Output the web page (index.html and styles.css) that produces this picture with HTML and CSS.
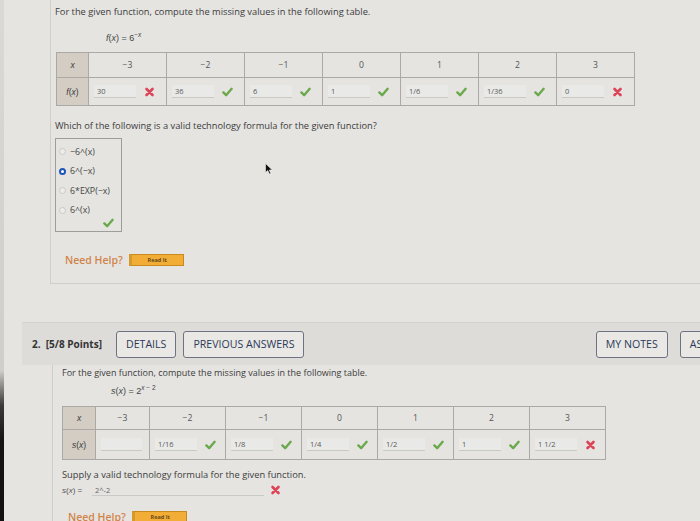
FILE: index.html
```html
<!DOCTYPE html>
<html>
<head>
<meta charset="utf-8">
<link rel="stylesheet" href="styles.css">
</head>
<body>
<div class="page">
  <div class="card card1">
    <p class="prompt">For the given function, compute the missing values in the following table.</p>
    <p class="formula"><i>f</i>(<i>x</i>) = 6<sup>−<i>x</i></sup></p>
    <table class="vt vt1">
      <tr class="hd">
        <td class="lbl"><i>x</i></td>
        <td>−3</td><td>−2</td><td>−1</td><td>0</td><td>1</td><td>2</td><td>3</td>
      </tr>
      <tr class="dt">
        <td class="lbl"><i>f</i>(<i>x</i>)</td>
        <td><div class="cell"><span class="inp">30</span><span class="ic x"><svg viewBox="0 0 10 10"><path d="M2 2L8 8M8 2L2 8"/></svg></span></div></td>
        <td><div class="cell"><span class="inp">36</span><span class="ic ok"><svg viewBox="0 0 12 10"><path d="M1.5 5.5L4.5 8.5L10.5 1.5"/></svg></span></div></td>
        <td><div class="cell"><span class="inp">6</span><span class="ic ok"><svg viewBox="0 0 12 10"><path d="M1.5 5.5L4.5 8.5L10.5 1.5"/></svg></span></div></td>
        <td><div class="cell"><span class="inp">1</span><span class="ic ok"><svg viewBox="0 0 12 10"><path d="M1.5 5.5L4.5 8.5L10.5 1.5"/></svg></span></div></td>
        <td><div class="cell"><span class="inp">1/6</span><span class="ic ok"><svg viewBox="0 0 12 10"><path d="M1.5 5.5L4.5 8.5L10.5 1.5"/></svg></span></div></td>
        <td><div class="cell"><span class="inp">1/36</span><span class="ic ok"><svg viewBox="0 0 12 10"><path d="M1.5 5.5L4.5 8.5L10.5 1.5"/></svg></span></div></td>
        <td><div class="cell"><span class="inp">0</span><span class="ic x"><svg viewBox="0 0 10 10"><path d="M2 2L8 8M8 2L2 8"/></svg></span></div></td>
      </tr>
    </table>
    <p class="prompt which">Which of the following is a valid technology formula for the given function?</p>
    <div class="choices">
      <div class="opt"><span class="radio"></span>−6^(x)</div>
      <div class="opt"><span class="radio on"></span>6^(−x)</div>
      <div class="opt"><span class="radio"></span>6*EXP(−x)</div>
      <div class="opt"><span class="radio"></span>6^(x)</div>
      <div class="chk"><span class="ic ok"><svg viewBox="0 0 12 10"><path d="M1.5 5.5L4.5 8.5L10.5 1.5"/></svg></span></div>
    </div>
    <div class="help"><span class="need">Need Help?</span><span class="readit">Read It</span></div>
  </div>

  <div class="qbar">
    <span class="qnum">2.&nbsp; [5/8 Points]</span>
    <span class="btn">DETAILS</span>
    <span class="btn">PREVIOUS ANSWERS</span>
    <span class="btn notes">MY NOTES</span>
    <span class="btn ask">ASK YOUR TEACHER</span>
  </div>

  <div class="card card2">
    <p class="prompt p2">For the given function, compute the missing values in the following table.</p>
    <p class="formula f2"><i>s</i>(<i>x</i>) = 2<sup><i>x</i> − 2</sup></p>
    <table class="vt vt2">
      <tr class="hd">
        <td class="lbl"><i>x</i></td>
        <td>−3</td><td>−2</td><td>−1</td><td>0</td><td>1</td><td>2</td><td>3</td>
      </tr>
      <tr class="dt">
        <td class="lbl"><i>s</i>(<i>x</i>)</td>
        <td><div class="cell"><span class="inp"></span></div></td>
        <td><div class="cell"><span class="inp">1/16</span><span class="ic ok"><svg viewBox="0 0 12 10"><path d="M1.5 5.5L4.5 8.5L10.5 1.5"/></svg></span></div></td>
        <td><div class="cell"><span class="inp">1/8</span><span class="ic ok"><svg viewBox="0 0 12 10"><path d="M1.5 5.5L4.5 8.5L10.5 1.5"/></svg></span></div></td>
        <td><div class="cell"><span class="inp">1/4</span><span class="ic ok"><svg viewBox="0 0 12 10"><path d="M1.5 5.5L4.5 8.5L10.5 1.5"/></svg></span></div></td>
        <td><div class="cell"><span class="inp">1/2</span><span class="ic ok"><svg viewBox="0 0 12 10"><path d="M1.5 5.5L4.5 8.5L10.5 1.5"/></svg></span></div></td>
        <td><div class="cell"><span class="inp">1</span><span class="ic ok"><svg viewBox="0 0 12 10"><path d="M1.5 5.5L4.5 8.5L10.5 1.5"/></svg></span></div></td>
        <td><div class="cell"><span class="inp">1 1/2</span><span class="ic x"><svg viewBox="0 0 10 10"><path d="M2 2L8 8M8 2L2 8"/></svg></span></div></td>
      </tr>
    </table>
    <p class="prompt supply">Supply a valid technology formula for the given function.</p>
    <div class="formrow"><span class="lab"><i>s</i>(<i>x</i>) = </span><span class="finp">2^-2</span><span class="ic x"><svg viewBox="0 0 10 10"><path d="M2 2L8 8M8 2L2 8"/></svg></span></div>
    <div class="help h2"><span class="need">Need Help?</span><span class="readit">Read It</span></div>
  </div>
  <svg class="cursor" viewBox="0 0 8 12"><path d="M0.5 0.5L0.5 9.5L2.8 7.5L4.4 11L5.8 10.4L4.3 7L7.3 7Z"/></svg>
</div>
</body>
</html>
```
FILE: styles.css
```css
html, body {
  margin: 0;
  padding: 0;
  overflow: hidden;
}
body {
  width: 700px;
  height: 521px;
  background: #e5e4e1;
  font-family: "Open Sans", "Liberation Sans", sans-serif;
  color: #3f3f3f;
}
.page {
  position: relative;
  height: 521px;
  border-left: 4px solid #d9d8d5;
  border-image: linear-gradient(#dad9d6 0, #cfcecb 370px, #3a3a3a 405px, #141414 440px, #111 100%) 1;
  box-sizing: border-box;
}
p { margin: 0; }
.card {
  border-left: 1px solid #cfcecb;
}
.card1 {
  margin-left: 46px;
  border-bottom: 1px solid #cfcecb;
  height: 277px;
  padding: 6px 0 0 4px;
}
.prompt {
  font-size: 9.3px;
  line-height: 12px;
  color: #3c3c3c;
  white-space: nowrap;
}
.formula {
  font-family: "Liberation Sans", sans-serif;
  font-size: 9px;
  line-height: 12px;
  margin: 14px 0 0 51px;
  color: #444;
}
.formula sup {
  font-size: 6.5px;
  vertical-align: 4px;
  line-height: 0;
}
.vt {
  border-collapse: collapse;
  margin-top: 8px;
  font-size: 8.6px;
  color: #555;
}
.vt td {
  border: 1px solid #aaa9a6;
  padding: 0;
  text-align: center;
}
.vt .lbl {
  background: #d3cdc4;
  color: #3a3a3a;
  font-family: "Liberation Sans", sans-serif;
  font-size: 8.5px;
}
.vt1 { margin-left: 1px; }
.vt1 .lbl { width: 31px; }
.vt1 td { width: 77px; }
.vt1 .hd td { height: 24px; }
.vt1 .dt td { height: 27px; }
.cell {
  display: flex;
  align-items: center;
  padding-left: 5px;
  gap: 8px;
}
.inp {
  display: block;
  width: 42px;
  height: 13px;
  line-height: 13px;
  text-align: left;
  padding-left: 3px;
  box-sizing: border-box;
  background: #e9e9e7;
  border-bottom: 1px solid #c9c9c6;
  font-size: 7.5px;
  color: #5a5a5a;
}
.ic {
  display: inline-block;
  width: 11px;
  height: 10px;
}
.ic svg { display: block; width: 100%; height: 100%; }
.ok svg path {
  fill: none;
  stroke: #6aa94c;
  stroke-width: 2.6;
  stroke-linecap: round;
  stroke-linejoin: round;
}
.x svg path {
  fill: none;
  stroke: #de4256;
  stroke-width: 2.6;
  stroke-linecap: round;
}
.which { margin-top: 14px; }
.choices {
  margin-top: 6px;
  width: 67px;
  height: 94px;
  border: 1px solid #9d9d9a;
  box-sizing: border-box;
  padding: 3px 0 0 3px;
  font-size: 8.8px;
  color: #444;
}
.opt {
  display: flex;
  align-items: center;
  gap: 4px;
  height: 19.5px;
}
.radio {
  width: 7px;
  height: 7px;
  border-radius: 50%;
  border: 1px solid #c9c9c6;
  background: #ececea;
  box-sizing: border-box;
}
.radio.on {
  border: 2px solid #1d55b8;
  background: #fff;
}
.chk {
  display: flex;
  justify-content: flex-end;
  padding-right: 7px;
  margin-top: -2px;
}
.help {
  display: flex;
  align-items: center;
  gap: 6px;
  margin: 21px 0 0 10px;
}
.need {
  font-size: 10.5px;
  font-weight: 600;
  color: #d1844a;
}
.readit {
  display: inline-block;
  width: 51px;
  height: 10px;
  line-height: 10px;
  text-align: center;
  background: #f1ad36;
  border: 1px solid #c98a1d;
  border-left: 3px solid #d59a2a;
  font-size: 5.5px;
  font-weight: 700;
  color: #6a4a18;
}
.qbar {
  margin: 38px 0 0 18px;
  width: 776px;
  height: 43px;
  background: #dddcd9;
  border-top: 1px solid #d3d2cf;
  display: flex;
  align-items: center;
  gap: 7px;
  padding-left: 10px;
  white-space: nowrap;
  box-sizing: border-box;
}
.qnum {
  font-size: 10px;
  font-weight: 700;
  color: #333;
  margin-right: 7px;
}
.btn {
  flex: none;
  display: inline-block;
  height: 25px;
  line-height: 25px;
  padding: 0 9px;
  border: 1.5px solid #6d7382;
  border-radius: 3px;
  background: #e9e8e5;
  font-size: 10.6px;
  color: #2c3a58;
}
.notes { margin-left: auto; }
.ask { margin-left: 5px; }
.card2 {
  margin-left: 48px;
  padding: 2px 0 0 9px;
  height: 160px;
}
.p2 { font-size: 9px; }
.f2 { margin: 6px 0 0 49px; }
.vt2 { margin-top: 9px; }
.vt2 .lbl { width: 32px; }
.vt2 td { width: 75px; }
.vt2 td:nth-child(2) { width: 53px; }
.vt2 .hd td { height: 22px; }
.vt2 .dt td { height: 29px; }
.vt2 td:nth-child(2) .inp { width: 41px; margin-left: 0; }
.supply { margin-top: 9px; }
.formrow {
  display: flex;
  align-items: center;
  margin-top: 3px;
  font-size: 8px;
  color: #555;
}
.formrow .lab {
  font-family: "Liberation Sans", sans-serif;
  width: 30px;
}
.finp {
  width: 172px;
  height: 12px;
  line-height: 12px;
  font-size: 7.5px;
  padding-left: 3px;
  box-sizing: border-box;
  border-bottom: 1px solid #c9c9c6;
  color: #666;
  margin-right: 6px;
}
.h2 { margin: 14px 0 0 6px; }
.cursor {
  position: absolute;
  left: 261px;
  top: 163px;
  width: 8px;
  height: 12px;
}
.cursor path {
  fill: #111;
  stroke: #eee;
  stroke-width: 0.6;
}
```
